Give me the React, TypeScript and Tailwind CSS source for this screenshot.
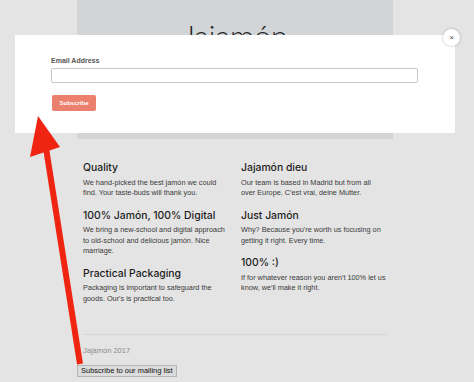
const features = [
  [
    {
      title: 'Quality',
      body: 'We hand-picked the best jamón we could find. Your taste-buds will thank you.',
    },
    {
      title: '100% Jamón, 100% Digital',
      body: 'We bring a new-school and digital approach to old-school and delicious jamón. Nice marriage.',
    },
    {
      title: 'Practical Packaging',
      body: "Packaging is important to safeguard the goods. Our's is practical too.",
    },
  ],
  [
    {
      title: 'Jajamón dieu',
      body: "Our team is based in Madrid but from all over Europe. C'est vrai, deine Mutter.",
    },
    {
      title: 'Just Jamón',
      body: "Why? Because you're worth us focusing on getting it right. Every time.",
    },
    {
      title: '100% :)',
      body: "If for whatever reason you aren't 100% let us know, we'll make it right.",
    },
  ],
];

function Feature({ title, body }: { title: string; body: string }) {
  return (
    <div>
      <h3
        className="text-[10.4px] leading-[14px] font-medium text-[#1c1c1c]"
        style={{ fontFamily: 'Inter, "Liberation Sans", sans-serif' }}
      >
        {title}
      </h3>
      <p className="mt-[2.5px] w-[145px] text-[7.3px] leading-[10.5px] text-[#3a3a3a]">{body}</p>
    </div>
  );
}

export default function App() {
  return (
    <div
      className="relative w-[474px] h-[382px] overflow-hidden bg-[#e4e4e4]"
      style={{ fontFamily: '"Liberation Sans", Arial, sans-serif' }}
    >
      <div className="ml-[77px] w-[316px]">
        <header className="h-[139px] bg-[#d2d5d8] flex justify-center">
          <h1
            className="mt-[17px] text-[30px] leading-[36px] font-light text-[#222]"
            style={{ fontFamily: 'Lato, "Liberation Sans", sans-serif' }}
          >
            Jajamón
          </h1>
        </header>

        <section className="px-[6px] pt-[22px]">
          <div className="grid grid-cols-[158px_1fr]">
            {features.map((col, i) => (
              <div key={i} className="flex flex-col gap-[10px]">
                {col.map((f) => (
                  <Feature key={f.title} title={f.title} body={f.body} />
                ))}
              </div>
            ))}
          </div>

          <div className="mt-[30px] border-t border-[#d6d6d6]" />
          <p className="mt-[11px] text-[7.5px] leading-[10px] text-[#8a8a8a]">Jajamón 2017</p>
        </section>

        <button className="mt-[7px] h-[12px] px-[3px] bg-[#dcdcdc] border border-[#b4b4b4] text-[7.5px] leading-[10px] text-[#111]">
          Subscribe to our mailing list
        </button>
      </div>

      {/* modal */}
      <div className="absolute left-[15px] top-[35px] w-[440px] h-[98px] bg-white px-[36px] pt-[21px]">
        <label className="block text-[7px] leading-[10px] font-bold text-[#555]">Email Address</label>
        <input className="mt-[2px] block w-[367px] h-[15px] border border-[#c8c8c8] rounded-[2px] bg-white outline-none" />
        <button className="mt-[12px] ml-[1px] w-[44px] h-[16px] rounded-[2px] bg-[#ec806f] text-white text-[6px] font-bold">
          Subscribe
        </button>
      </div>

      <button className="absolute left-[443px] top-[29px] w-[17px] h-[17px] rounded-full bg-white shadow-[0_0_3px_rgba(0,0,0,0.25)] flex items-center justify-center text-[8px] leading-none text-[#444]">
        ×
      </button>

      {/* annotation arrow */}
      <svg className="absolute inset-0 pointer-events-none" width="474" height="382" viewBox="0 0 474 382">
        <line x1="46" y1="148" x2="80" y2="364" stroke="#ef2512" strokeWidth="6" />
        <polygon points="38,116 30,157 60,147" fill="#ef2512" />
      </svg>
    </div>
  );
}
